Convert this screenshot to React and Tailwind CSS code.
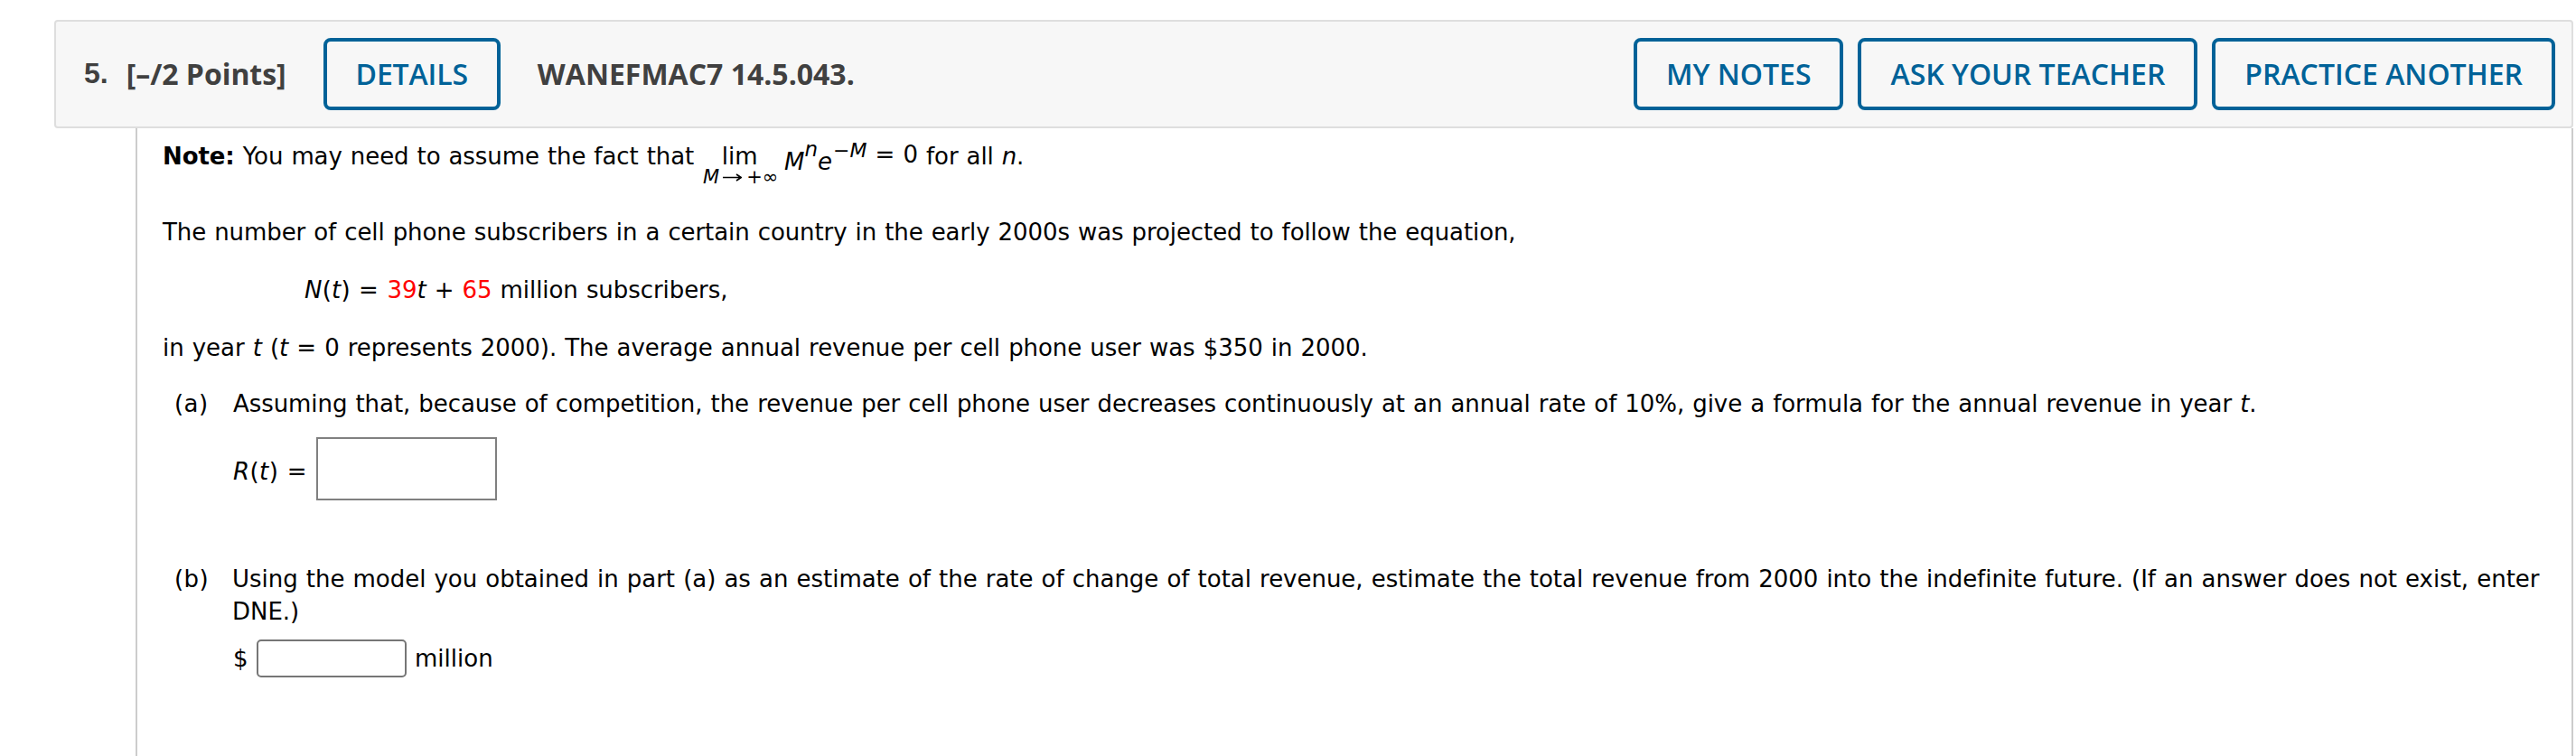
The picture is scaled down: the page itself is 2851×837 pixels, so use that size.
import React, { useState } from 'react'

const actions = ['MY NOTES', 'ASK YOUR TEACHER', 'PRACTICE ANOTHER']

function HeaderButton({ children, className = '' }){
  return (
    <button className={`h-20 px-8 border-4 border-[#006298] rounded-lg text-[32px] font-semibold text-[#006298] whitespace-nowrap ${className}`}>
      {children}
    </button>
  )
}

function Limit(){
  return (
    <span className="ml-2 inline-flex w-[85px] flex-col items-center">
      <span>lim</span>
      <span className="flex h-[11px] w-full items-center pl-[2px] text-[21px] leading-[11px] tracking-normal">
        <i>M</i>
        <svg className="ml-[4px] mr-[5px] h-[9px] w-[21px] shrink-0" viewBox="0 0 21 9" fill="none" stroke="black" strokeWidth="1.6">
          <path d="M0 4.5H20M15 1L20.2 4.5L15 8" />
        </svg>
        <span>+∞</span>
      </span>
    </span>
  )
}

export default function App(){
  const [answerA, setAnswerA] = useState('')
  const [answerB, setAnswerB] = useState('')

  return (
    <div className="h-[837px] w-[2851px] overflow-hidden bg-white pt-[22px] pl-[60px] pr-[3px] font-['DejaVu_Sans',sans-serif] text-[26px] leading-9 text-black">
      <header className="flex h-[120px] items-center rounded border-2 border-[#dedede] bg-[#f7f7f7] pl-[31px] pr-[18px] font-['Open_Sans',sans-serif] text-[32px] font-bold text-[#404040]">
        <span className="pb-[3px] font-['Liberation_Sans',sans-serif]">5.</span>
        <span className="ml-5 tracking-[-0.05px]">[–/2 Points]</span>
        <HeaderButton className="ml-[41px] tracking-[-0.15px]">DETAILS</HeaderButton>
        <span className="ml-[41px]">WANEFMAC7 14.5.043.</span>
        <div className="ml-auto flex gap-4">
          {actions.map(a => <HeaderButton key={a}>{a}</HeaderButton>)}
        </div>
      </header>

      <main className="ml-[90px] h-[700px] border-x-2 border-[#ccc] pl-7 pt-[13px] [word-spacing:0.9px]">
        <p className="h-[84px] whitespace-nowrap">
          <b className="tracking-[-0.1px]">Note:</b> <span className="tracking-[-0.09px]">You may need to assume the fact that</span>
          <Limit />
          <i className="ml-[7px] align-[-6px] leading-[0]">M</i>
          <i className="align-[9px] text-[23px] leading-[0]">n</i>
          <i className="align-[-6px] leading-[0]">e</i>
          <span className="ml-px align-[8px] text-[22px] leading-[0]">−<i>M</i></span>
          <span className="ml-[9px] align-[2px] leading-[0]">= 0</span>
          <span className="ml-[9px] tracking-[-0.1px]">for all <i>n</i>.</span>
        </p>
        <p className="tracking-[-0.085px]">The number of cell phone subscribers in a certain country in the early 2000s was projected to follow the equation,</p>
        <p className="ml-[157px] mt-7 tracking-[-0.06px]">
          <span className="tracking-[0.2px]"><i>N</i>(<i>t</i>) = </span>
          <span className="text-[#f00]">39</span><i>t</i> + <span className="text-[#f00]">65</span> million subscribers,
        </p>
        <p className="mt-7 tracking-[-0.05px]">in year <i>t</i> (<i>t</i> = 0 represents 2000). The average annual revenue per cell phone user was $350 in 2000.</p>

        <section className="mt-[26px] flex pl-[13px]">
          <span className="w-[65px] shrink-0 tracking-[0.4px]">(a)</span>
          <div>
            <p className="whitespace-nowrap tracking-[-0.065px]">
              Assuming that, because of competition, the revenue per cell phone user decreases continuously at an annual rate of 10%, give a formula for the annual revenue in year <i>t</i>.
            </p>
            <div className="mt-[19px] flex items-start">
              <label className="mt-5 w-[92px] whitespace-nowrap tracking-[0.4px]"><i>R</i>(<i>t</i>) =</label>
              <input className="h-[70px] w-[200px] border-2 border-[#808080] px-2" value={answerA} onChange={e => setAnswerA(e.target.value)} />
            </div>
          </div>
        </section>

        <section className="mt-[69px] flex pl-[13px]">
          <span className="w-[64px] shrink-0 tracking-[0.4px]">(b)</span>
          <div>
            <p className="whitespace-nowrap tracking-[-0.025px]">
              Using the model you obtained in part (a) as an estimate of the rate of change of total revenue, estimate the total revenue from 2000 into the indefinite future. (If an answer does not exist, enter<br />
              DNE.)
            </p>
            <div className="mt-[13px] flex items-center">
              <span className="w-[27px] pl-px">$</span>
              <input className="h-[42px] w-[166px] rounded-[5px] border-2 border-[#767676] px-1" value={answerB} onChange={e => setAnswerB(e.target.value)} />
              <span className="ml-[9px]">million</span>
            </div>
          </div>
        </section>
      </main>
    </div>
  )
}
